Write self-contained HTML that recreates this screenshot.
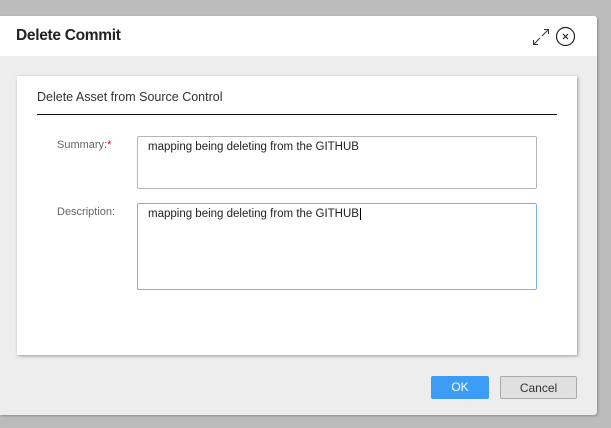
<!DOCTYPE html>
<html><head><style>
*{margin:0;padding:0;box-sizing:border-box}
body{width:611px;height:428px;background:#bcbcbc;position:relative;overflow:hidden;font-family:"Liberation Sans",sans-serif}
.dlg{position:absolute;left:0;top:16px;width:597px;height:399px;background:#ededed;border-radius:0 3px 3px 0;box-shadow:1px 1px 2px rgba(0,0,0,.25)}
.hdr{position:absolute;left:0;top:0;width:597px;height:40px;background:#fff;border-radius:0 3px 0 0}
.title{position:absolute;left:16px;top:11px;font-size:15.5px;font-weight:bold;color:#222;letter-spacing:-0.3px}
.card{position:absolute;left:17px;top:60px;width:560px;height:279px;background:#fff;box-shadow:1px 1px 3px rgba(0,0,0,.35)}
.sub{position:absolute;left:20px;top:14px;font-size:12.5px;color:#333;letter-spacing:0}
.line{position:absolute;left:20px;top:38px;width:520px;height:1px;background:#111}
.lbl{position:absolute;font-size:11px;color:#666}
.box{position:absolute;left:120px;width:400px;border:1px solid #b5b5b5;border-radius:2px;font-size:11.5px;color:#222;padding:4px 10px;letter-spacing:0}
.btn{position:absolute;top:360px;height:23px;font-size:12px;text-align:center;line-height:22px;border-radius:2px}
</style></head><body>
<div class="dlg">
 <div class="hdr">
  <div class="title">Delete Commit</div>
  <svg style="position:absolute;left:532px;top:12px" width="18" height="18" viewBox="0 0 18 18" fill="none" stroke="#333" stroke-width="1"><path d="M1.5 16.5L8 10M1.5 12v4.5H6M16.5 1.5L10 8M12 1.5h4.5V6"/></svg>
  <svg style="position:absolute;left:555px;top:10px" width="21" height="21" viewBox="0 0 21 21" fill="none" stroke="#222" stroke-width="1.2"><circle cx="10.5" cy="10.5" r="9"/><path d="M8 8l5 5M13 8l-5 5"/></svg>
 </div>
 <div class="card">
  <div class="sub">Delete Asset from Source Control</div>
  <div class="line"></div>
  <div class="lbl" style="left:40px;top:63px">Summary:<span style="color:#d0021b">*</span></div>
  <div class="box" style="top:60px;height:53px">mapping being deleting from the GITHUB</div>
  <div class="lbl" style="left:40px;top:130px">Description:</div>
  <div class="box" style="top:127px;height:87px;border-color:#7ab3e8">mapping being deleting from the GITHUB<span style="border-left:1px solid #000;margin-left:1px"></span></div>
 </div>
 <div class="btn" style="left:431px;width:58px;background:#3d9cf5;color:#fff">OK</div>
 <div class="btn" style="left:500px;width:77px;background:#e0e0e0;border:1px solid #aaa;color:#333">Cancel</div>
</div>
</body></html>
